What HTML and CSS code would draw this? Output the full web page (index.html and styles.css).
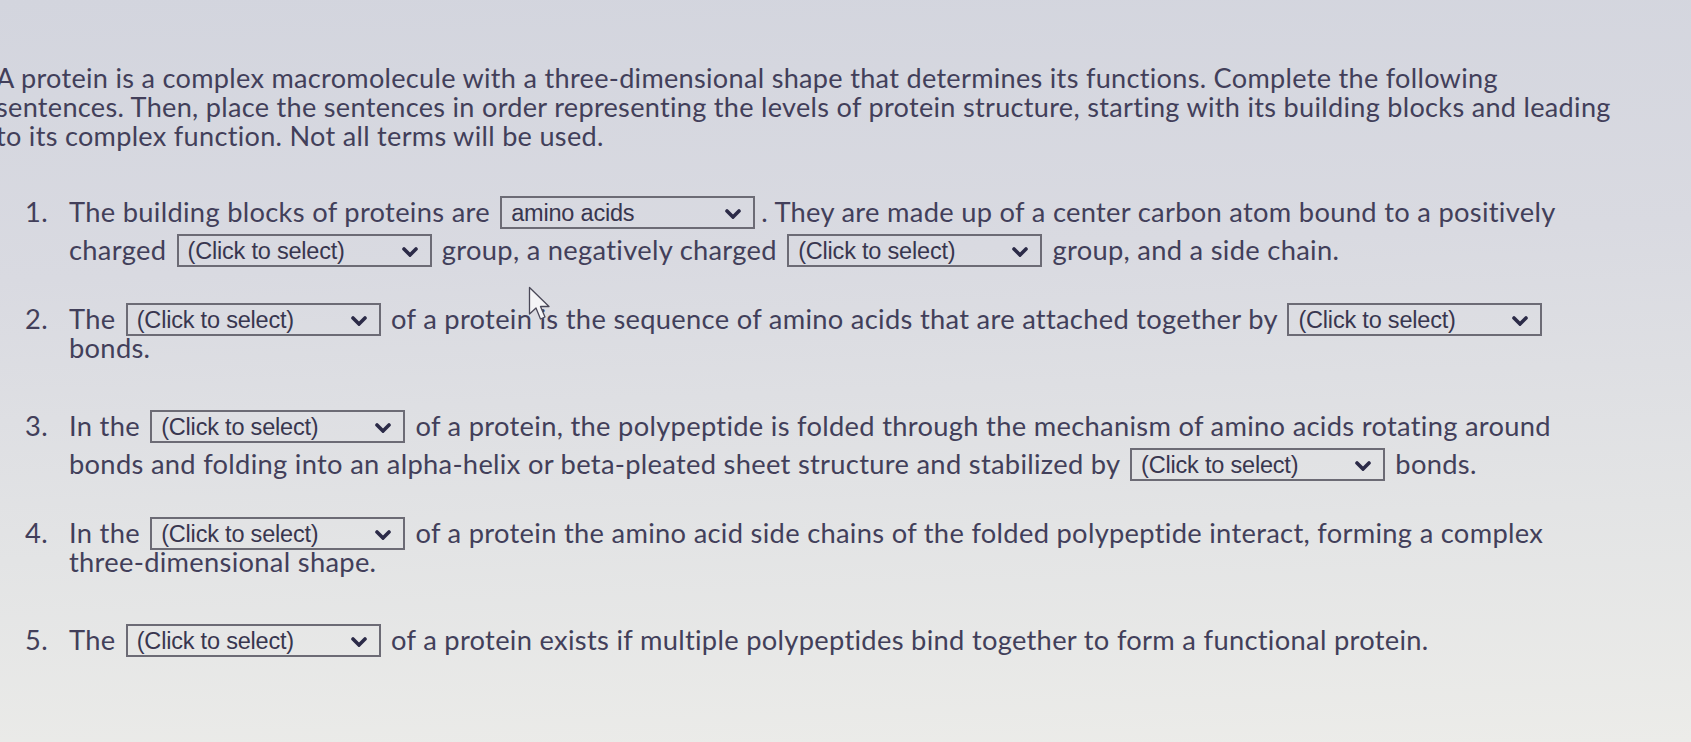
FILE: index.html
```html
<!DOCTYPE html>
<html lang="en">
<head>
<meta charset="utf-8">
<title>Levels of protein structure</title>
<link rel="stylesheet" href="styles.css">
</head>
<body>
<main class="page">
  <p class="intro">A protein is a complex macromolecule with a three-dimensional shape that determines its functions. Complete the following sentences. Then, place the sentences in order representing the levels of protein structure, starting with its building blocks and leading to its complex function. Not all terms will be used.</p>

  <ol class="steps">
    <li class="step">
      <span class="num">1.</span>
      <p class="step-text">The building blocks of proteins are <span class="pick pick-tight"><span class="pick-inner"><span class="pick-label">amino acids</span><svg class="chev" viewBox="0 0 16 10" aria-hidden="true"><polyline points="2,2 8,8 14,2"/></svg></span></span>. They are made up of a center carbon atom bound to a positively charged <span class="pick"><span class="pick-inner"><span class="pick-label">(Click to select)</span><svg class="chev" viewBox="0 0 16 10" aria-hidden="true"><polyline points="2,2 8,8 14,2"/></svg></span></span> group, a negatively charged <span class="pick"><span class="pick-inner"><span class="pick-label">(Click to select)</span><svg class="chev" viewBox="0 0 16 10" aria-hidden="true"><polyline points="2,2 8,8 14,2"/></svg></span></span> group, and a side chain.</p>
    </li>
    <li class="step">
      <span class="num">2.</span>
      <p class="step-text">The <span class="pick"><span class="pick-inner"><span class="pick-label">(Click to select)</span><svg class="chev" viewBox="0 0 16 10" aria-hidden="true"><polyline points="2,2 8,8 14,2"/></svg></span></span> of a protein is the sequence of amino acids that are attached together by <span class="pick"><span class="pick-inner"><span class="pick-label">(Click to select)</span><svg class="chev" viewBox="0 0 16 10" aria-hidden="true"><polyline points="2,2 8,8 14,2"/></svg></span></span> bonds.</p>
    </li>
    <li class="step">
      <span class="num">3.</span>
      <p class="step-text">In the <span class="pick"><span class="pick-inner"><span class="pick-label">(Click to select)</span><svg class="chev" viewBox="0 0 16 10" aria-hidden="true"><polyline points="2,2 8,8 14,2"/></svg></span></span> of a protein, the polypeptide is folded through the mechanism of amino acids rotating around bonds and folding into an alpha-helix or beta-pleated sheet structure and stabilized by <span class="pick"><span class="pick-inner"><span class="pick-label">(Click to select)</span><svg class="chev" viewBox="0 0 16 10" aria-hidden="true"><polyline points="2,2 8,8 14,2"/></svg></span></span> bonds.</p>
    </li>
    <li class="step">
      <span class="num">4.</span>
      <p class="step-text">In the <span class="pick"><span class="pick-inner"><span class="pick-label">(Click to select)</span><svg class="chev" viewBox="0 0 16 10" aria-hidden="true"><polyline points="2,2 8,8 14,2"/></svg></span></span> of a protein the amino acid side chains of the folded polypeptide interact, forming a complex three-dimensional shape.</p>
    </li>
    <li class="step">
      <span class="num">5.</span>
      <p class="step-text">The <span class="pick"><span class="pick-inner"><span class="pick-label">(Click to select)</span><svg class="chev" viewBox="0 0 16 10" aria-hidden="true"><polyline points="2,2 8,8 14,2"/></svg></span></span> of a protein exists if multiple polypeptides bind together to form a functional protein.</p>
    </li>
  </ol>

  <svg class="pointer" viewBox="0 0 22 36" aria-hidden="true"><path d="M1.5 1.5 L1.5 28 L8 22 L12.5 33 L17 31 L12.5 20.5 L21 20.5 Z"/></svg>
</main>
</body>
</html>
```

FILE: styles.css
```css
html, body {
  margin: 0;
  height: 100%;
}

body {
  background: linear-gradient(178deg, #d3d5de 0%, #d9dae1 35%, #e3e4e5 70%, #ecece9 100%);
  color: #423f5a;
  font-family: Lato, "Open Sans", sans-serif;
  letter-spacing: 0.3px;
  overflow: hidden;
}

.page {
  position: relative;
  padding-top: 63px;
}

.intro {
  margin: 0 0 0 -4px;
  width: 1630px;
  font-size: 27.1px;
  line-height: 29px;
}

.steps {
  list-style: none;
  margin: 38px 0 0;
  padding: 0 0 0 25px;
  width: 1569px;
  font-size: 27.3px;
}

/* every step takes the room of two dropdown lines, so the steps sit on an even pitch */
.step {
  display: grid;
  grid-template-columns: 44px 1fr;
  min-height: 76px;
  margin-bottom: 31px;
}

/* the first line of every step holds a dropdown, which adds 9px above the text */
.num {
  margin-top: 9px;
  line-height: 29px;
}

.step-text {
  margin: 0;
  line-height: 29px;
}

/* dropdown: its bottom margin edge is its baseline, so the box hangs
   into the descender zone without pushing the next line down */
.pick {
  display: inline-block;
  overflow: hidden;
  box-sizing: border-box;
  width: 255px;
  height: 33px;
  margin: 8px 3px -3px;
  vertical-align: -4px;
  border: 2px solid #6c6b75;
  font-family: "Liberation Sans", Arial, sans-serif;
  font-size: 23.5px;
  letter-spacing: -0.2px;
  line-height: 27px;
  color: #38364f;
}

.pick-inner {
  display: flex;
  align-items: center;
  justify-content: space-between;
  box-sizing: border-box;
  height: 100%;
  padding: 2px 12px 0 9px;
}

.pick-tight {
  margin-right: 6px;
}

.chev {
  flex: none;
  width: 16px;
  height: 10px;
  fill: none;
  stroke: #2c2b48;
  stroke-width: 3.6;
  stroke-linecap: round;
  stroke-linejoin: miter;
}

.pointer {
  position: absolute;
  left: 528px;
  top: 286px;
  width: 22px;
  height: 36px;
  fill: #f4f4f6;
  stroke: #4a4858;
  stroke-width: 1.3;
  stroke-linejoin: round;
}
```
